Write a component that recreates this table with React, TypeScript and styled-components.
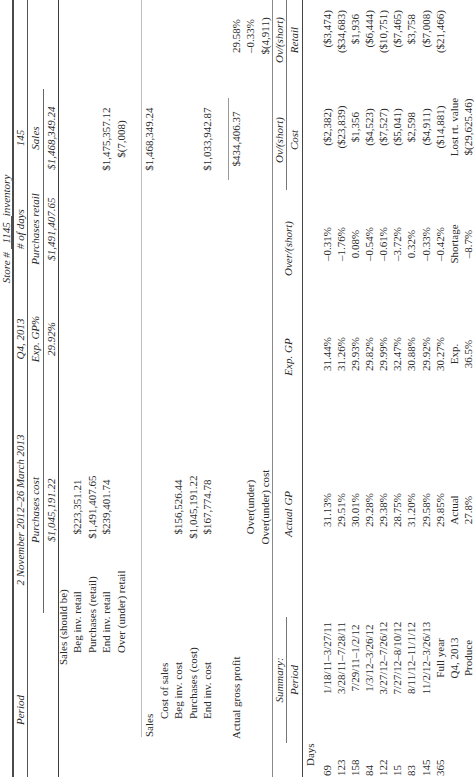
import React from 'react';
import styled, { createGlobalStyle } from 'styled-components';

const GlobalStyle = createGlobalStyle`
  html, body {
    margin: 0;
    padding: 0;
    background: #fff;
  }
`;

// column tracks of the (unrotated) table, measured along the reading direction
const HEAD_COLS = '164px 206px 136px 84px 98px 89px';
const BODY_COLS = '200px 140px 240px 116px 9px 72px';
const SUM_HEAD_COLS = '34px 126px 38px 130px 42px 100px 117px 100px 90px';
const SUM_DATA_COLS = '40px 158px 138px 44px 86px 134px 100px 67px';

const Viewport = styled.div`
  width: 474px;
  height: 777px;
  overflow: hidden;
  background: #fff;
`;

// the page is printed sideways: lay it out flat, then turn it a quarter left
const Sheet = styled.div`
  width: 777px;
  height: 474px;
  transform-origin: 0 0;
  transform: translateY(777px) rotate(-90deg);
  display: flex;
  flex-direction: column;
  font-family: 'Liberation Serif', 'Times New Roman', serif;
  font-size: 11px;
  color: #2a2a2a;
  white-space: nowrap;
`;

const Caption = styled.div`
  display: grid;
  grid-template-columns: ${HEAD_COLS};
  line-height: 12px;
  height: 12px;
  border-bottom: 2px solid #4a4a4a;
  font-style: italic;
`;

const CaptionText = styled.span`
  grid-column: 4;
  justify-self: center;
`;

const Blank = styled.span`
  display: inline-block;
  padding: 0 6px;
  line-height: 10px;
  border-bottom: 1px solid #555;
`;

const HeadRow = styled.div<{ $lh: number; $rule?: string }>`
  display: grid;
  grid-template-columns: ${HEAD_COLS};
  line-height: ${(p) => p.$lh}px;
  border-bottom: ${(p) => p.$rule ?? 'none'};
  font-style: italic;
`;

const HeadCell = styled.div<{ $col: number; $pad?: number; $rule?: boolean }>`
  grid-column: ${(p) => p.$col};
  text-align: ${(p) => (p.$pad !== undefined ? 'left' : 'center')};
  padding-left: ${(p) => p.$pad ?? 0}px;
  border-bottom: ${(p) => (p.$rule ? '1px solid #666' : 'none')};
`;

const Body = styled.div`
  display: flex;
  flex-direction: column;
  margin-top: -3px;
`;

const BodyRow = styled.div`
  display: grid;
  grid-template-columns: ${BODY_COLS};
  height: 14.6px;
  line-height: 14.6px;
`;

const Label = styled.div<{ $indent: number }>`
  grid-column: 1;
  padding-left: ${(p) => p.$indent}px;
`;

const Val = styled.div<{ $col: number }>`
  grid-column: ${(p) => p.$col};
  text-align: center;
`;

const Rule = styled.div<{ $gap: number; $left: number; $width?: number; $color: string; $weight?: number }>`
  margin-top: ${(p) => p.$gap}px;
  margin-left: ${(p) => p.$left}px;
  width: ${(p) => (p.$width ? `${p.$width}px` : 'auto')};
  border-top: ${(p) => p.$weight ?? 1}px solid ${(p) => p.$color};
`;

const SumHead = styled.div`
  display: grid;
  grid-template-columns: ${SUM_HEAD_COLS};
  grid-template-rows: 14px 14.5px;
  border-top: 1px solid #8a8a8a;
  border-bottom: 1.5px solid #444;
  font-style: italic;
`;

const SumHeadCell = styled.div<{ $col: number; $row: 'top' | 'bottom' | 'both'; $rule?: boolean; $padLeft?: number }>`
  grid-column: ${(p) => p.$col};
  grid-row: ${(p) => (p.$row === 'top' ? '1' : p.$row === 'bottom' ? '2' : '1 / span 2')};
  align-self: ${(p) => (p.$row === 'both' ? 'center' : 'stretch')};
  box-sizing: border-box;
  line-height: ${(p) => (p.$row === 'top' ? '13px' : '14px')};
  text-align: center;
  padding-left: ${(p) => p.$padLeft ?? 0}px;
  border-bottom: ${(p) => (p.$rule ? '1px solid #777' : 'none')};
`;

const DaysRow = styled.div`
  height: 14px;
  line-height: 14px;
  padding-left: 11px;
`;

const DataList = styled.div`
  padding-top: 3px;
`;

const DataRow = styled.div`
  display: grid;
  grid-template-columns: ${SUM_DATA_COLS};
  height: 14.1px;
  line-height: 14.1px;
`;

const DataCell = styled.div<{ $col: number; $align?: 'left' | 'center' | 'right'; $padLeft?: number; $padRight?: number }>`
  grid-column: ${(p) => p.$col};
  text-align: ${(p) => p.$align ?? 'center'};
  padding-left: ${(p) => p.$padLeft ?? 0}px;
  padding-right: ${(p) => p.$padRight ?? 0}px;
`;

type BodyLine = { label?: string; indent?: number; v1?: string; v2?: string; v3?: string };

const retailBlock: BodyLine[] = [
  { label: 'Sales (should be)', indent: 112 },
  { label: 'Beg inv. retail', indent: 124, v1: '$223,351.21' },
  { label: 'Purchases (retail)', indent: 124, v1: '$1,491,407.65' },
  { label: 'End inv. retail', indent: 124, v1: '$239,401.74', v2: '$1,475,357.12' },
  { label: 'Over (under) retail', indent: 124, v2: '$(7,008)' },
];

const costBlock: BodyLine[] = [
  { label: 'Sales', indent: 40, v2: '$1,468,349.24' },
  { label: 'Cost of sales', indent: 58 },
  { label: 'Beg inv. cost', indent: 58, v1: '$156,526.44' },
  { label: 'Purchases (cost)', indent: 58, v1: '$1,045,191.22' },
  { label: 'End inv. cost', indent: 58, v1: '$167,774.78', v2: '$1,033,942.87' },
];

const profitBlock: BodyLine[] = [
  { label: 'Actual gross profit', indent: 38, v2: '$434,406.37', v3: '29.58%' },
  { v1: 'Over(under)', v3: '–0.33%' },
  { v1: 'Over(under) cost', v3: '$(4,911)' },
];

const summary: string[][] = [
  ['69', '1/18/11–3/27/11', '31.13%', '31.44%', '–0.31%', '($2,382)', '($3,474)'],
  ['123', '3/28/11–7/28/11', '29.51%', '31.26%', '–1.76%', '($23,839)', '($34,683)'],
  ['158', '7/29/11–1/2/12', '30.01%', '29.93%', '0.08%', '$1,356', '$1,936'],
  ['84', '1/3/12–3/26/12', '29.28%', '29.82%', '–0.54%', '($4,523)', '($6,444)'],
  ['122', '3/27/12–7/26/12', '29.38%', '29.99%', '–0.61%', '($7,527)', '($10,751)'],
  ['15', '7/27/12–8/10/12', '28.75%', '32.47%', '–3.72%', '($5,041)', '($7,465)'],
  ['83', '8/11/12–11/1/12', '31.20%', '30.88%', '0.32%', '$2,598', '$3,758'],
  ['145', '11/2/12–3/26/13', '29.58%', '29.92%', '–0.33%', '($4,911)', '($7,008)'],
  ['365', 'Full year', '29.85%', '30.27%', '–0.42%', '($14,881)', '($21,466)'],
  ['', 'Q4, 2013', 'Actual', 'Exp.', 'Shortage', 'Lost rt. value', ''],
  ['', 'Produce', '27.8%', '36.5%', '–8.7%', '$(29,625.46)', ''],
];

const BodyBlock: React.FC<{ lines: BodyLine[] }> = ({ lines }) => (
  <>
    {lines.map((l, i) => (
      <BodyRow key={i}>
        {l.label && <Label $indent={l.indent ?? 0}>{l.label}</Label>}
        {l.v1 && <Val $col={2}>{l.v1}</Val>}
        {l.v2 && <Val $col={4}>{l.v2}</Val>}
        {l.v3 && <Val $col={6}>{l.v3}</Val>}
      </BodyRow>
    ))}
  </>
);

export default function App() {
  return (
    <Viewport>
      <GlobalStyle />
      <Sheet>
        <Caption>
          <CaptionText>
            Store # <Blank>1145</Blank>inventory
          </CaptionText>
        </Caption>
        <HeadRow $lh={13} $rule='1px solid #555'>
          <HeadCell $col={1} $pad={52}>Period</HeadCell>
          <HeadCell $col={2}>2 November 2012–26 March 2013</HeadCell>
          <HeadCell $col={3}>Q4, 2013</HeadCell>
          <HeadCell $col={4}># of days</HeadCell>
          <HeadCell $col={5}>145</HeadCell>
        </HeadRow>
        <HeadRow $lh={14.5}>
          <HeadCell $col={2} $rule>Purchases cost</HeadCell>
          <HeadCell $col={3} $rule>Exp. GP%</HeadCell>
          <HeadCell $col={4} $rule>Purchases retail</HeadCell>
          <HeadCell $col={5} $rule>Sales</HeadCell>
        </HeadRow>
        <HeadRow $lh={14} $rule='1.5px solid #3d3d3d'>
          <HeadCell $col={2}>$1,045,191.22</HeadCell>
          <HeadCell $col={3}>29.92%</HeadCell>
          <HeadCell $col={4}>$1,491,407.65</HeadCell>
          <HeadCell $col={5}>$1,468,349.24</HeadCell>
        </HeadRow>

        <Body>
          <BodyBlock lines={retailBlock} />
          <Rule $gap={12.6} $left={40} $color='#bdbdbd' $weight={1.5} />
          <BodyBlock lines={costBlock} />
          <Rule $gap={12.6} $left={597} $width={82} $color='#9a9a9a' />
          <BodyBlock lines={profitBlock} />
        </Body>

        <SumHead>
          <SumHeadCell $col={2} $row='top' $rule>Summary:</SumHeadCell>
          <SumHeadCell $col={2} $row='bottom'>Period</SumHeadCell>
          <SumHeadCell $col={4} $row='both'>Actual GP</SumHeadCell>
          <SumHeadCell $col={6} $row='both'>Exp. GP</SumHeadCell>
          <SumHeadCell $col={7} $row='both'>Over/(short)</SumHeadCell>
          <SumHeadCell $col={8} $row='top' $rule>Ov/(short)</SumHeadCell>
          <SumHeadCell $col={8} $row='bottom'>Cost</SumHeadCell>
          <SumHeadCell $col={9} $row='top' $rule $padLeft={10}>Ov/(short)</SumHeadCell>
          <SumHeadCell $col={9} $row='bottom' $padLeft={10}>Retail</SumHeadCell>
        </SumHead>

        <DaysRow>Days</DaysRow>
        <DataList>
          {summary.map((r, i) => (
            <DataRow key={i}>
              <DataCell $col={1} $align='left' $padLeft={1}>{r[0]}</DataCell>
              <DataCell $col={2}>{r[1]}</DataCell>
              <DataCell $col={3}>{r[2]}</DataCell>
              <DataCell $col={5}>{r[3]}</DataCell>
              <DataCell $col={6}>{r[4]}</DataCell>
              <DataCell $col={7}>{r[5]}</DataCell>
              <DataCell $col={8} $align='right' $padRight={r[6].endsWith(')') ? 0 : 4}>
                {r[6]}
              </DataCell>
            </DataRow>
          ))}
        </DataList>
      </Sheet>
    </Viewport>
  );
}
